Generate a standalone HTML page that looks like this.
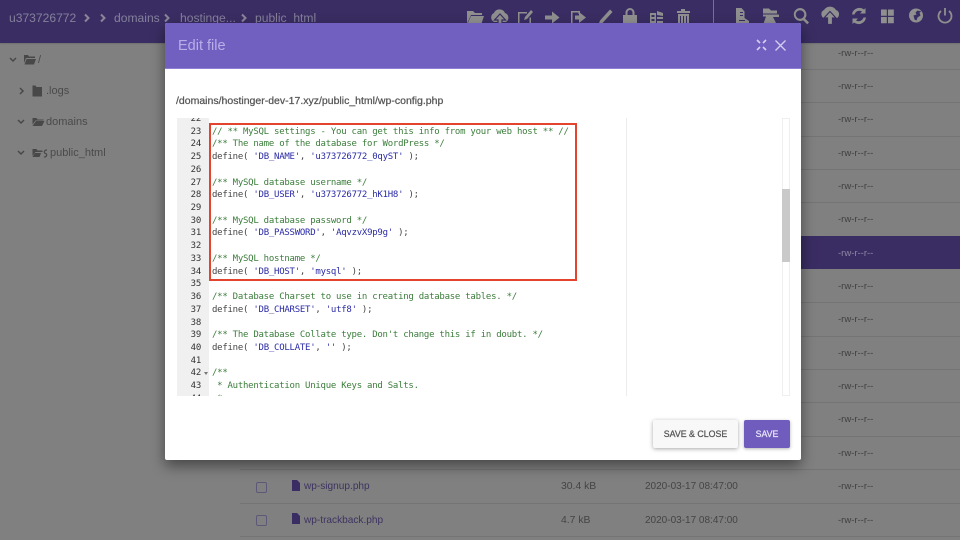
<!DOCTYPE html>
<html lang="en">
<head>
<meta charset="utf-8">
<title>Edit file</title>
<style>
*{box-sizing:border-box;margin:0;padding:0}
html,body{width:960px;height:540px;overflow:hidden;background:#808080}
body{font-family:"Liberation Sans",sans-serif;position:relative}
#wrap{position:absolute;left:0;top:0;width:960px;height:540px;overflow:hidden;background:#808080}
.abs{position:absolute}
.hdr{left:0;top:0;width:960px;height:43px;background:#3a2d63;box-shadow:0 1px 1px rgba(0,0,0,.12)}
.crumb{position:absolute;top:10px;font-size:12.1px;line-height:16px;color:#85809b;white-space:nowrap}
.ln{position:absolute;left:240px;width:720px;height:1px;background:#747474}
.sel{left:240px;top:236px;width:720px;height:33px;background:#3a2d63}
.perm{position:absolute;left:838px;margin-top:1px;font-size:9.5px;line-height:12px;color:#3f3f3f;white-space:nowrap}
.tree{position:absolute;font-size:11px;line-height:14px;color:#4a4a4a;white-space:nowrap}
svg{position:absolute;overflow:visible}
.modal{z-index:3;left:165px;top:23px;width:636px;height:437px;background:#fff;border-radius:2px;box-shadow:0 6px 14px rgba(0,0,0,.45)}
.mh{position:absolute;left:0;top:0;width:636px;height:46px;background:#7160bf;border-radius:2px 2px 0 0;border-bottom:1px solid #8f80d4}
.mt{position:absolute;left:13px;top:14px;font-size:14.5px;line-height:18px;color:#b9aee8}
.path{position:absolute;left:11px;top:71px;font-size:10.5px;line-height:14px;color:#555;white-space:nowrap;-webkit-text-stroke:.25px #555}
.ed{position:absolute;left:12px;top:95px;width:613px;height:278px;overflow:hidden;background:#fff}
.gut{position:absolute;left:0;top:0;width:32px;height:278px;background:#f0f0f0}
.pm{position:absolute;left:449px;top:0;width:1px;height:278px;background:#ececec}
.code{position:absolute;left:35px;top:-5px;font-family:"DejaVu Sans Mono","Liberation Mono",monospace;font-size:9px;letter-spacing:-.25px;line-height:12.72px;white-space:pre;color:#444}
.nums{position:absolute;left:0;top:-5px;width:24px;text-align:right;font-family:"DejaVu Sans Mono","Liberation Mono",monospace;font-size:9px;letter-spacing:-.25px;line-height:12.72px;color:#333;white-space:pre}
.c{color:#3b7d3b}.s{color:#2a2aa6}
.fold{position:absolute;left:27px;top:254px;width:0;height:0;border-left:2px solid transparent;border-right:2px solid transparent;border-top:3px solid #777}
.red{position:absolute;left:44px;top:100px;width:368px;height:158px;border:2px solid #e4432d}
.sb{position:absolute;left:617px;top:95px;width:8px;height:278px;border:1px solid #efefef;background:#fff}
.th{position:absolute;left:617px;top:166px;width:8px;height:73px;background:#c9c9c9}
.b1{position:absolute;left:488px;top:397px;width:85px;height:28px;background:#f8f8f8;border-radius:2px;box-shadow:0 1px 4px rgba(0,0,0,.35);text-align:center;font-size:8.8px;-webkit-text-stroke:.25px #555;line-height:28px;color:#555}
.b2{position:absolute;left:579px;top:397px;width:46px;height:28px;background:#6f5cbd;border-radius:2px;box-shadow:0 1px 3px rgba(0,0,0,.3);text-align:center;font-size:8.8px;-webkit-text-stroke:.25px #e9e5fa;line-height:28px;color:#e9e5fa}
.cb{position:absolute;left:256px;width:11px;height:11px;border:1.3px solid #5e5878;border-radius:2px}
.fn{position:absolute;left:304px;font-size:10.1px;line-height:14px;color:#3d3360;white-space:nowrap}
.sz{position:absolute;left:561px;font-size:10.4px;line-height:14px;color:#444;white-space:nowrap}
.dt{position:absolute;left:645px;font-size:10px;line-height:14px;color:#444;white-space:nowrap}
</style>
</head>
<body>
<div id="wrap">
  <div class="abs hdr"></div>
  <div class="crumb" style="left:9px">u373726772</div>
  <div class="crumb" style="left:114px">domains</div>
  <div class="crumb" style="left:180px">hostinge...</div>
  <div class="crumb" style="left:255px">public_html</div>
  <svg width="960" height="43" style="left:0;top:0" fill="none" stroke="#8a8599" stroke-width="2">
    <path d="M85 14.500l3.500 3.500-3.500 3.500M101 14.500l3.500 3.500-3.500 3.500M165 14.500l3.500 3.500-3.500 3.500M242 14.500l3.500 3.500-3.500 3.500"/>
  </svg>

  <!-- toolbar icons -->
  <svg width="960" height="43" style="left:0;top:0" fill="#8f8f8f">
    <path d="M467 11h6l2 2h7v2h-11l-4 9zM471 16h13l-3 9h-14z"/>
    <path d="M494 22a5 5 0 0 1 0-9 6 6 0 0 1 11 0 5 5 0 0 1 1 9z"/>
    <path d="M500 14l5.500 6h-3.500v6h-4v-6h-3.500z" stroke="#3a2d63" stroke-width="1.200"/>
    <path d="M518 12h9v1.500h-7.500v11h10v-7h1.500v8.500h-13zM531 10l2 2-6 7-3 1 1-3z"/>
    <path d="M545 15.500h7v-4l7.500 6-7.500 6v-4h-7z"/>
    <path d="M571 11h9v3h-1.500v-1.500h-6v12h6V23h1.500v3h-9zM575 15.500h4v-3.500l7 5.500-7 5.500v-3.500h-4z"/>
    <path d="M610 9.500l2.500 2.500-10 11-4 1.500 1.500-4z"/>
    <path fill-rule="evenodd" d="M623 15h2.500v-2.500a4.500 4.500 0 0 1 9 0V15h2.500v11h-14zM627.500 15h5v-2.500a2.500 2.500 0 0 0-5 0z"/>
    <path d="M650 13h6v13h-6zM651.500 15v2h3v-2zM651.500 19v2h3v-2zM657 11l6 2v3l-6-1zM657 17h6v2h-6zM657 21h6v2l-6 2z"/>
    <path d="M677 11h4V9h4v2h5v2h-13zM678 14h11v12h-11zM680 16v8h1v-8zM683 16v8h1v-8zM686 16v8h1v-8z"/>
    <rect x="713" y="0" width="1" height="24" fill="#77728c"/>
    <g transform="translate(0,-1.500)">
      <path d="M736 9.500h5.500l3 3.500v6.500l4.500 3v4.500h-13z"/>
      <path d="M740 14h3M740 17h3M739 22h6" fill="none" stroke="#3a2d63" stroke-width="1"/>
      <path d="M763 10h6l2 2h6v3h-14zM763 16h16v2.500h-6l3 6h3v2h-16l3-8.500h-3z"/>
      <path fill-rule="evenodd" d="M800 9.500a6.500 6.500 0 0 1 5 10.500l4 4-1.800 1.800-4-4A6.500 6.500 0 1 1 800 9.500zm0 2.200a4.300 4.300 0 1 0 0 8.600 4.300 4.300 0 0 0 0-8.600z"/>
      <path d="M825 20a4.500 4.500 0 0 1-1-8.500 7 7 0 0 1 12 0 4.500 4.500 0 0 1 0 8.500z"/>
      <path d="M830 13l6 6.500h-3.500v6.500h-5v-6.500H824z" stroke="#3a2d63" stroke-width="1.200"/>
      <path d="M852 16a7.500 7.500 0 0 1 12-5l1.500-1.500v5.500h-5.500l2-2a5 5 0 0 0-7.500 3zM866 19a7.500 7.500 0 0 1-12 5l-1.500 1.500V20h5.500l-2 2a5 5 0 0 0 7.500-3z"/>
      <path d="M881 11h5.800v6.200H881zM888 11h5.800v6.200H888zM881 18.500h5.800v6.200H881zM888 18.500h5.800v6.200H888z"/>
      <path fill-rule="evenodd" d="M916 10a7 7 0 1 1 0 14 7 7 0 0 1 0-14zm1.500 2l-2 2 1 2-3 1 1 4 2 1 1-3 3-2-1-3 2-1z"/>
      <path fill="none" stroke="#8f8f8f" stroke-width="1.800" d="M941 12.500a6.500 6.500 0 1 0 8 0M945 9.500v7.500"/>
    </g>
  </svg>

  <!-- left tree -->
  <svg width="240" height="170" style="left:0;top:0" fill="none" stroke="#484848" stroke-width="1.500">
    <path d="M10 58l3 3 3-3M20 88l3 3-3 3M18 120l3 3 3-3M18 151l3 3 3-3"/>
    <g fill="#484848" stroke="none">
      <path d="M24 55h4l1 1.500h6v1.500h-9l-2 5zM26.500 59H36l-2 5.500H24.500z"/>
      <path d="M32.500 85.500h3l1 1.500h5.500v9.500H32.500z"/>
      <path d="M32.500 118h4l1 1.500h6v1h-8l-3 4zM36 121h8.500l-2.500 5h-9.500z"/>
      <path d="M32.500 149h4l1 1.500h5v1.500h-7l-3 4zM35 153h6l-1.500 4h-7z"/>
    </g>
    <path stroke-width="1.200" d="M47 150c-3 0-3.500 3-1.500 3.500s1.500 3.500-1.500 3.500"/>
  </svg>
  <div class="tree" style="left:38px;top:53px">/</div>
  <div class="tree" style="left:46px;top:84px">.logs</div>
  <div class="tree" style="left:46px;top:115px">domains</div>
  <div class="tree" style="left:50px;top:146px">public_html</div>

  <!-- table -->
  <div class="ln" style="top:69px"></div>
  <div class="ln" style="top:102px"></div>
  <div class="ln" style="top:136px"></div>
  <div class="ln" style="top:169px"></div>
  <div class="ln" style="top:202px"></div>
  <div class="abs sel"></div>
  <div class="ln" style="top:302px"></div>
  <div class="ln" style="top:336px"></div>
  <div class="ln" style="top:369px"></div>
  <div class="ln" style="top:402px"></div>
  <div class="ln" style="top:436px"></div>
  <div class="ln" style="top:469px"></div>
  <div class="ln" style="top:503px"></div>
  <div class="ln" style="top:536px"></div>
  <div class="perm" style="top:47px">-rw-r--r--</div>
  <div class="perm" style="top:80px">-rw-r--r--</div>
  <div class="perm" style="top:113px">-rw-r--r--</div>
  <div class="perm" style="top:147px">-rw-r--r--</div>
  <div class="perm" style="top:180px">-rw-r--r--</div>
  <div class="perm" style="top:213px">-rw-r--r--</div>
  <div class="perm" style="top:247px;color:#8d88a3">-rw-r--r--</div>
  <div class="perm" style="top:280px">-rw-r--r--</div>
  <div class="perm" style="top:313px">-rw-r--r--</div>
  <div class="perm" style="top:347px">-rw-r--r--</div>
  <div class="perm" style="top:380px">-rw-r--r--</div>
  <div class="perm" style="top:413px">-rw-r--r--</div>
  <div class="perm" style="top:447px">-rw-r--r--</div>
  <div class="perm" style="top:480px">-rw-r--r--</div>
  <div class="perm" style="top:514px">-rw-r--r--</div>

  <div class="cb" style="top:482px"></div>
  <div class="cb" style="top:515px"></div>
  <svg width="10" height="12" style="left:292px;top:480px" fill="#3a2d63"><path d="M0 0h5l3 3v8H0z"/></svg>
  <svg width="10" height="12" style="left:292px;top:513px" fill="#3a2d63"><path d="M0 0h5l3 3v8H0z"/></svg>
  <div class="fn" style="top:480px">wp-signup.php</div>
  <div class="fn" style="top:514px">wp-trackback.php</div>
  <div class="sz" style="top:480px">30.4 kB</div>
  <div class="sz" style="top:514px">4.7 kB</div>
  <div class="dt" style="top:480px">2020-03-17 08:47:00</div>
  <div class="dt" style="top:514px">2020-03-17 08:47:00</div>

  <!-- modal -->
  <div class="abs modal">
    <div class="mh">
      <div class="mt">Edit file</div>
      <svg width="30" height="16" style="left:590px;top:15px" fill="none" stroke="#d5cff2" stroke-width="1.300">
        <path d="M2 2l3 3M11 2L8 5M2 12l3-3M11 12L8 9" stroke-width="1.600"/>
        <path d="M20.500 2.500l10 10M30.500 2.500l-10 10"/>
      </svg>
    </div>
    <div class="path">/domains/hostinger-dev-17.xyz/public_html/wp-config.php</div>
    <div class="ed">
      <div class="gut"></div>
      <div class="pm"></div>
<div class="nums">22
23
24
25
26
27
28
29
30
31
32
33
34
35
36
37
38
39
40
41
42
43
44</div>
      <div class="fold"></div>
<div class="code">
<span class="c">// ** MySQL settings - You can get this info from your web host ** //</span>
<span class="c">/** The name of the database for WordPress */</span>
define( <span class="s">'DB_NAME'</span>, <span class="s">'u373726772_0qyST'</span> );

<span class="c">/** MySQL database username */</span>
define( <span class="s">'DB_USER'</span>, <span class="s">'u373726772_hK1H8'</span> );

<span class="c">/** MySQL database password */</span>
define( <span class="s">'DB_PASSWORD'</span>, <span class="s">'AqvzvX9p9g'</span> );

<span class="c">/** MySQL hostname */</span>
define( <span class="s">'DB_HOST'</span>, <span class="s">'mysql'</span> );

<span class="c">/** Database Charset to use in creating database tables. */</span>
define( <span class="s">'DB_CHARSET'</span>, <span class="s">'utf8'</span> );

<span class="c">/** The Database Collate type. Don't change this if in doubt. */</span>
define( <span class="s">'DB_COLLATE'</span>, <span class="s">''</span> );

<span class="c">/**</span>
<span class="c"> * Authentication Unique Keys and Salts.</span>
<span class="c"> *</span></div>
    </div>
    <div class="red"></div>
    <div class="sb"></div>
    <div class="th"></div>
    <div class="b1">SAVE &amp; CLOSE</div>
    <div class="b2">SAVE</div>
  </div>
</div>
</body>
</html>
